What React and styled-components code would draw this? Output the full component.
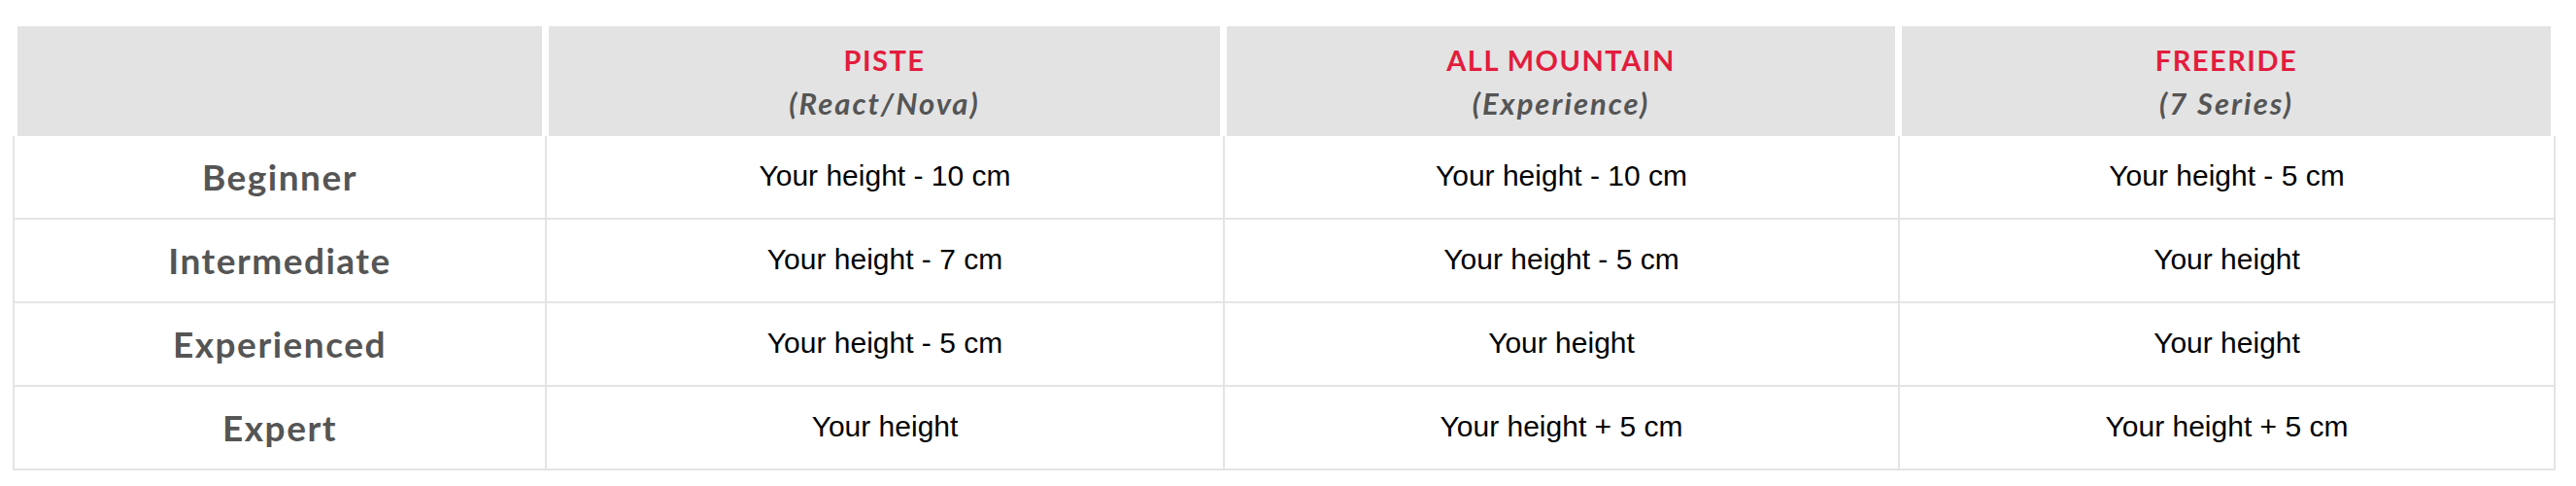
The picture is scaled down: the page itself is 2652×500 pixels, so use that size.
import React from "react";
import styled, { createGlobalStyle } from "styled-components";

const Global = createGlobalStyle`
  html, body { margin: 0; padding: 0; background: #ffffff; }
  body { font-family: "Liberation Sans", Arial, sans-serif; }
`;

const COLS = "548px 698px 695px 677px";

const Table = styled.div`
  width: 2618px;
  margin: 23px 0 0 13px;
`;

const HeaderRow = styled.div`
  display: grid;
  grid-template-columns: ${COLS};
  padding-top: 4px;
`;

const HeadCell = styled.div`
  height: 113px;
  background: #e3e3e3;
  margin: 0 3px 0 4px;
  &:first-child { margin-left: 5px; }
  &:last-child { margin-right: 5px; }
  display: flex;
  flex-direction: column;
  align-items: center;
  justify-content: center;
  font-family: Lato, "Open Sans", sans-serif;
  font-weight: 700;
  line-height: 44px;
`;

const Title = styled.div`
  color: #e31c3d;
  font-size: 29px;
  text-transform: uppercase;
  letter-spacing: 1.5px;
`;

const Subtitle = styled.div`
  color: #555555;
  font-size: 31px;
  font-style: italic;
  letter-spacing: 2px;
`;

const Row = styled.div`
  display: grid;
  grid-template-columns: ${COLS};
  height: 86px;
  border-bottom: 2px solid #e4e4e4;
  box-sizing: border-box;
`;

const Cell = styled.div`
  border-left: 2px solid #e4e4e4;
  box-sizing: border-box;
  display: flex;
  align-items: center;
  justify-content: center;
  &:last-child { border-right: 2px solid #e4e4e4; }
  color: ${(p) => (p.$label ? "#555555" : "#000000")};
  font-family: ${(p) =>
    p.$label ? 'Lato, "Open Sans", sans-serif' : '"Liberation Sans", Arial, sans-serif'};
  font-weight: ${(p) => (p.$label ? 700 : 400)};
  font-size: ${(p) => (p.$label ? "37px" : "30px")};
  letter-spacing: ${(p) => (p.$label ? "1.5px" : "normal")};
  padding-bottom: 2px;
`;

const columns = [
  { title: "Piste", sub: "(React/Nova)" },
  { title: "All Mountain", sub: "(Experience)" },
  { title: "Freeride", sub: "(7 Series)" },
];

const rows = [
  ["Beginner", "Your height - 10 cm", "Your height - 10 cm", "Your height - 5 cm"],
  ["Intermediate", "Your height - 7 cm", "Your height - 5 cm", "Your height"],
  ["Experienced", "Your height - 5 cm", "Your height", "Your height"],
  ["Expert", "Your height", "Your height + 5 cm", "Your height + 5 cm"],
];

export default function App() {
  return (
    <>
      <Global />
      <Table>
        <HeaderRow>
          <HeadCell />
          {columns.map((c) => (
            <HeadCell key={c.title}>
              <Title>{c.title}</Title>
              <Subtitle>{c.sub}</Subtitle>
            </HeadCell>
          ))}
        </HeaderRow>
        {rows.map((r) => (
          <Row key={r[0]}>
            {r.map((v, i) => (
              <Cell key={i} $label={i === 0}>
                {v}
              </Cell>
            ))}
          </Row>
        ))}
      </Table>
    </>
  );
}
